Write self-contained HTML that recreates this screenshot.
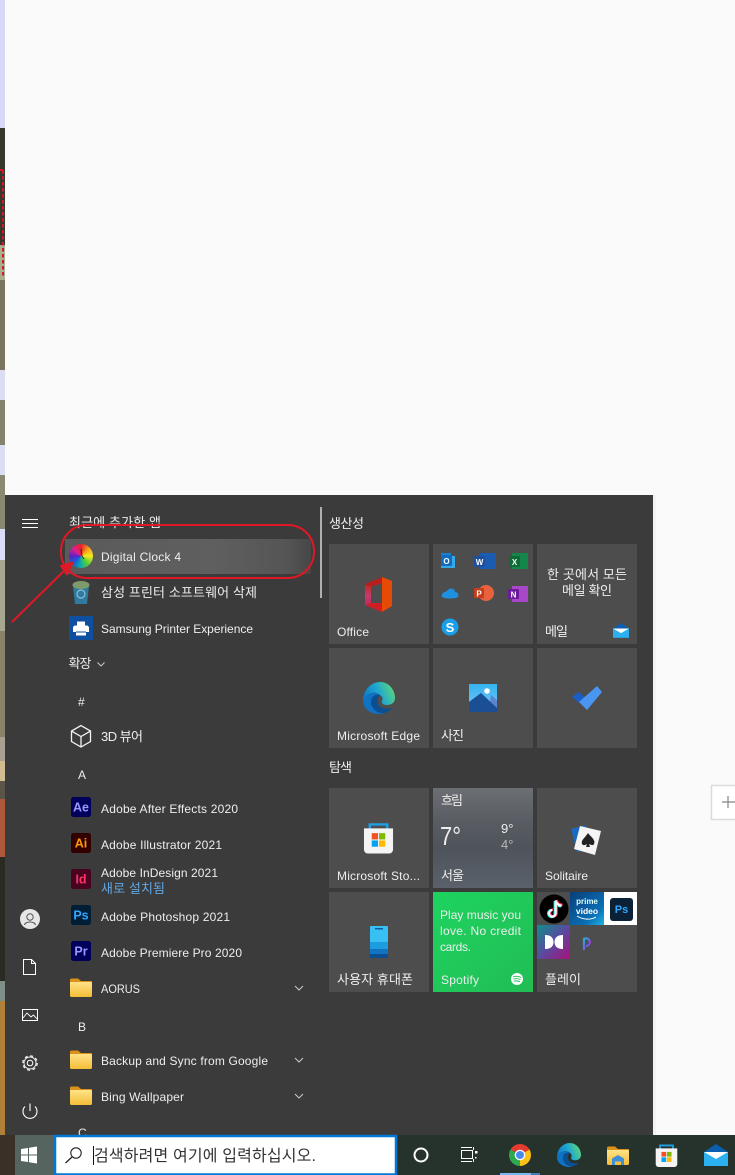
<!DOCTYPE html>
<html lang="ko">
<head>
<meta charset="utf-8">
<title>Start menu</title>
<style>
html,body{margin:0;padding:0;background:#fafafa;width:735px;height:1175px;overflow:hidden}
svg{display:block;position:absolute;left:0;top:0}
text{font-family:"Liberation Sans","Noto Sans CJK KR",sans-serif;font-size:12px;fill:#eeeeee}
.k{font-size:13px}
.b{font-weight:bold;font-size:12.500px;text-anchor:middle}
</style>
</head>
<body>
<svg width="735" height="1175" viewBox="0 0 735 1175" xmlns="http://www.w3.org/2000/svg">
<defs>
  <linearGradient id="row" x1="0" x2="1" y1="0" y2="0"><stop offset="0" stop-color="#5a5a5a"/><stop offset=".6" stop-color="#5f5f5f"/><stop offset=".9" stop-color="#555"/><stop offset="1" stop-color="#464646"/></linearGradient>
  <linearGradient id="wx" x1="0" x2="0" y1="0" y2="1"><stop offset="0" stop-color="#6b6f74"/><stop offset=".35" stop-color="#585c62"/><stop offset=".6" stop-color="#4f545b"/><stop offset="1" stop-color="#5a616b"/></linearGradient>
  <linearGradient id="spot" x1="0" x2="1" y1="0" y2="1"><stop offset="0" stop-color="#1ed35f"/><stop offset="1" stop-color="#21bd55"/></linearGradient>
  <linearGradient id="prime" x1="0" x2="1" y1="0" y2="1"><stop offset="0" stop-color="#0a3d7a"/><stop offset=".7" stop-color="#0a6fb5"/><stop offset="1" stop-color="#1fb4e8"/></linearGradient>
  <linearGradient id="dolby" x1="0" x2="1" y1="0" y2="1"><stop offset="0" stop-color="#0f8f88"/><stop offset=".5" stop-color="#5a4aa0"/><stop offset="1" stop-color="#a8107a"/></linearGradient>
  <linearGradient id="pics" x1="0" x2="1" y1="0" y2="1"><stop offset="0" stop-color="#20b0e0"/><stop offset="1" stop-color="#b020d0"/></linearGradient>
  <linearGradient id="folder" x1="0" x2="0" y1="0" y2="1"><stop offset="0" stop-color="#ffe38a"/><stop offset="1" stop-color="#f5bd35"/></linearGradient>
  <linearGradient id="edgeg" x1="0" x2="1" y1="0.6" y2="0.3"><stop offset="0" stop-color="#0f78c8"/><stop offset=".5" stop-color="#20a8d0"/><stop offset="1" stop-color="#5fd778"/></linearGradient>
  <linearGradient id="photo" x1="0" x2="0" y1="0" y2="1"><stop offset="0" stop-color="#35b4f0"/><stop offset="1" stop-color="#7fc4f5"/></linearGradient>
  <linearGradient id="phone" x1="0" x2="0" y1="0" y2="1"><stop offset="0" stop-color="#38c0f5"/><stop offset=".5" stop-color="#38c0f5"/><stop offset=".5" stop-color="#1e9ce0"/><stop offset=".72" stop-color="#1e9ce0"/><stop offset=".72" stop-color="#1274c0"/><stop offset=".88" stop-color="#1274c0"/><stop offset=".88" stop-color="#0b4f90"/></linearGradient>
  <linearGradient id="lband" x1="0" x2="0" y1="0" y2="1"><stop offset="0" stop-color="#c02a22"/><stop offset=".55" stop-color="#c83a6a"/><stop offset="1" stop-color="#c02a60"/></linearGradient>
  <symbol id="fld" viewBox="0 0 22 19"><path d="M0 2a1.500 1.500 0 0 1 1.500-1.500H8L11 3H22V5H0Z" fill="#d9921a"/><path d="M0 4H20.500A1.500 1.500 0 0 1 22 5.500V17.500A1.500 1.500 0 0 1 20.500 19H1.500A1.500 1.500 0 0 1 0 17.500Z" fill="url(#folder)"/></symbol>
  <symbol id="bag" viewBox="0 0 32 32"><path d="M7 7V2H25V7" fill="none" stroke="#1ea0e6" stroke-width="2.500"/><path d="M1 6H31V28A4 4 0 0 1 27 32H5A4 4 0 0 1 1 28Z" fill="#f4f4f4"/><rect x="9" y="11" width="6.500" height="6.500" fill="#f25022"/><rect x="16.500" y="11" width="6.500" height="6.500" fill="#7fba00"/><rect x="9" y="18.500" width="6.500" height="6.500" fill="#00a4ef"/><rect x="16.500" y="18.500" width="6.500" height="6.500" fill="#ffb900"/></symbol>
  <symbol id="edge" viewBox="-16 -16 32 32"><path d="M-16 3C-16-9-7-16 1-16C10-16 16-8 16 0C16 5 12 7 8 7C4 7 2 5 3 3C4 1 4-1 1-3C-3-7-12-6-16 3Z" fill="url(#edgeg)"/><path d="M-16 3C-12-6-3-7 1-3C-3-4-8-2-8 4C-8 10-2 16 6 15C3 16 1 16 0 16C-9 16-16 10-16 3Z" fill="#0f72c4"/><path d="M-8 4C-8-2-3-4 1-3C-1-1-2 2-1 5C0 10 6 12 13 10C10 14 6 15 5 15C-2 16-8 10-8 4Z" fill="#0b4f92"/></symbol>
  <symbol id="mail" viewBox="0 0 24 22"><path d="M0 8L12 0L24 8V10H0Z" fill="#0a5fb0"/><path d="M0 8H24V22H0Z" fill="#2cb0f0"/><path d="M0 8H24L12 15Z" fill="#fff"/></symbol>
</defs>

<!-- left wallpaper strip -->
<rect x="0" y="0" width="5" height="128" fill="#d8d8f8"/>
<rect x="0" y="128" width="5" height="117" fill="#38372d"/>
<rect x="0" y="245" width="5" height="35" fill="#a8b090"/>
<rect x="0" y="280" width="5" height="90" fill="#7a7560"/>
<rect x="0" y="370" width="5" height="30" fill="#dcdcf4"/>
<rect x="0" y="400" width="5" height="45" fill="#85836c"/>
<rect x="0" y="445" width="5" height="30" fill="#dcdcf4"/>
<rect x="0" y="475" width="5" height="54" fill="#8a8a70"/>
<rect x="0" y="529" width="5" height="31" fill="#dcdcf8"/>
<rect x="0" y="560" width="5" height="71" fill="#a8a890"/>
<rect x="0" y="631" width="5" height="106" fill="#8a8268"/>
<rect x="0" y="737" width="5" height="24" fill="#a8a090"/>
<rect x="0" y="761" width="5" height="20" fill="#d0bc90"/>
<rect x="0" y="781" width="5" height="18" fill="#5a5548"/>
<rect x="0" y="799" width="5" height="58" fill="#b0583c"/>
<rect x="0" y="857" width="5" height="124" fill="#2a2a22"/>
<rect x="0" y="981" width="5" height="20" fill="#7c9088"/>
<rect x="0" y="1001" width="5" height="134" fill="#b08038"/>
<path d="M3 170V278" stroke="#d01828" stroke-width="2" stroke-dasharray="3.500 2.500" fill="none"/>
<path d="M0 170H3" stroke="#d01828" stroke-width="2"/>

<!-- right plus box -->
<rect x="711.500" y="785.500" width="30" height="34" fill="#fff" stroke="#dcdcdc" stroke-width="1.500"/>
<path d="M722 802H735M728 796V808" stroke="#858585" stroke-width="1.200"/>

<!-- start menu -->
<rect x="5" y="495" width="648" height="640" fill="#3b3b3b"/>
<rect x="653" y="495" width="3" height="640" fill="#f3f3f3"/>

<!-- hamburger -->
<path d="M22 519.500H38M22 523.500H38M22 527.500H38" stroke="#fff" stroke-width="1"/>

<!-- app list -->
<text class="k" x="69" y="527" textLength="92">최근에 추가한 앱</text>
<rect x="65" y="539" width="246" height="35" fill="url(#row)"/>
<foreignObject x="69" y="544" width="24" height="24"><div xmlns="http://www.w3.org/1999/xhtml" style="width:24px;height:24px;border-radius:50%;background:conic-gradient(#e8202a,#f7a01a,#f5ea20,#5fd030,#10b0a0,#1060e0,#6020c0,#e02090,#e8202a)"></div></foreignObject>
<path d="M81 549L82 556L84 559" stroke="#2a2a2a" stroke-width="1" fill="none"/>
<text x="101" y="561" textLength="80">Digital Clock 4</text>

<path d="M73 586H89L87 604H75Z" fill="#2f7a9e"/>
<ellipse cx="81" cy="585" rx="8.500" ry="4" fill="#7e9a6c"/>
<circle cx="81" cy="594" r="4" fill="none" stroke="#8cc0dc" stroke-width="1.200"/>
<text class="k" x="101" y="597" textLength="156">삼성 프린터 소프트웨어 삭제</text>

<rect x="69" y="616" width="24" height="24" fill="#0f4fa0"/>
<path d="M77 621.500H85V625.500H87.500L89 627V632H86V635.500H76V632H73V627L74.500 625.500H77Z" fill="#fff"/>
<path d="M76 632H86" stroke="#0f4fa0" stroke-width="1"/>
<text x="101" y="633" textLength="152">Samsung Printer Experience</text>

<text class="k" x="68.500" y="668" textLength="23">확장</text>
<path d="M97.500 662.500L101 666L104.500 662.500" stroke="#ccc" fill="none"/>

<text x="78" y="706">#</text>
<path d="M81 725.500L90.500 731V741.500L81 747L71.500 741.500V731ZM71.500 731L81 736.500L90.500 731M81 736.500V747" fill="none" stroke="#f2f2f2" stroke-width="1.300"/>
<text class="k" x="101" y="741" textLength="42">3D 뷰어</text>

<text x="78" y="779">A</text>
<rect x="71" y="797" width="20" height="20" rx="2.500" fill="#00005b"/><text class="b" x="81" y="811.500" style="fill:#9999ff">Ae</text>
<text x="101" y="813" textLength="137">Adobe After Effects 2020</text>
<rect x="71" y="833" width="20" height="20" rx="2.500" fill="#330000"/><text class="b" x="81" y="847.500" style="fill:#ff9a00">Ai</text>
<text x="101" y="849" textLength="121">Adobe Illustrator 2021</text>
<rect x="71" y="869" width="20" height="20" rx="2.500" fill="#49021f"/><text class="b" x="81" y="883.500" style="fill:#ff3366">Id</text>
<text x="101" y="877" textLength="117">Adobe InDesign 2021</text>
<text class="k" x="101" y="893" textLength="64" style="fill:#62a6e2">새로 설치됨</text>
<rect x="71" y="905" width="20" height="20" rx="2.500" fill="#001e36"/><text class="b" x="81" y="919.500" style="fill:#31a8ff">Ps</text>
<text x="101" y="921" textLength="129">Adobe Photoshop 2021</text>
<rect x="71" y="941" width="20" height="20" rx="2.500" fill="#00005b"/><text class="b" x="81" y="955.500" style="fill:#9999ff">Pr</text>
<text x="101" y="957" textLength="141">Adobe Premiere Pro 2020</text>
<use href="#fld" x="70" y="978" width="22" height="19"/>
<text x="101" y="993" textLength="39" lengthAdjust="spacingAndGlyphs">AORUS</text>
<path d="M295 986L299 990L303 986" stroke="#ccc" fill="none"/>
<text x="78" y="1031">B</text>
<use href="#fld" x="70" y="1050" width="22" height="19"/>
<text x="101" y="1065" textLength="167">Backup and Sync from Google</text>
<path d="M295 1058L299 1062L303 1058" stroke="#ccc" fill="none"/>
<use href="#fld" x="70" y="1086" width="22" height="19"/>
<text x="101" y="1101" textLength="83">Bing Wallpaper</text>
<path d="M295 1094L299 1098L303 1094" stroke="#ccc" fill="none"/>
<text x="78" y="1137">C</text>

<!-- scrollbar -->
<rect x="320" y="507" width="2" height="91" fill="#b0b0b0"/>

<!-- left rail icons -->
<circle cx="30" cy="919" r="10" fill="#e6e6e6"/>
<circle cx="30" cy="917" r="3.200" fill="none" stroke="#555" stroke-width="1"/>
<path d="M24.500 925C25 921 35 921 35.500 925" fill="none" stroke="#555" stroke-width="1"/>
<path d="M23.500 959.500H31.500L35.500 963.500V974.500H23.500ZM31.500 959.500V963.500H35.500" fill="none" stroke="#fff" stroke-width="1"/>
<rect x="22.500" y="1009.500" width="15" height="11" fill="none" stroke="#fff"/>
<path d="M23 1018L27 1013L31 1017L33.500 1015L37 1019" fill="none" stroke="#fff" stroke-width=".9"/>
<circle cx="30" cy="1063" r="2.800" fill="none" stroke="#fff"/>
<circle cx="30" cy="1063" r="6" fill="none" stroke="#fff" stroke-width=".9"/>
<circle cx="30" cy="1063" r="7.200" fill="none" stroke="#fff" stroke-width="1.200" stroke-dasharray="2.900 2.750"/>
<path d="M25 1106.500A7 7 0 1 0 35 1106.500M30 1103.500V1111" fill="none" stroke="#fff" stroke-width="1.100"/>

<!-- annotation -->
<rect x="61" y="525" width="253" height="53" rx="26" fill="none" stroke="#e01825" stroke-width="2"/>
<path d="M12 622L66 569" stroke="#e01825" stroke-width="2"/>
<path d="M74.500 561L59.500 565.500L67 576Z" fill="#e01825"/>

<!-- tiles -->
<text class="k" x="329" y="528" textLength="35">생산성</text>
<g fill="#4d4d4d">
<rect x="329" y="544" width="100" height="100"/><rect x="433" y="544" width="100" height="100"/><rect x="537" y="544" width="100" height="100"/>
<rect x="329" y="648" width="100" height="100"/><rect x="433" y="648" width="100" height="100"/><rect x="537" y="648" width="100" height="100"/>
<rect x="329" y="788" width="100" height="100"/><rect x="537" y="788" width="100" height="100"/>
<rect x="329" y="892" width="100" height="100"/><rect x="537" y="892" width="100" height="100"/>
</g>

<!-- office -->
<path d="M382 577L392 581V606L382 612L372 606L382 603V583L372 586Z" fill="#e64a05"/>
<path d="M382 577V583L371 586.500L365 586.500V584Z" fill="#b81e1e"/>
<path d="M365 585L371 586.500V603L365 605Z" fill="url(#lband)"/>
<path d="M365 605L371 603L382 603V612Z" fill="#d01f24"/>
<text x="337" y="636" textLength="32">Office</text>

<!-- office apps -->
<rect x="441" y="556" width="14" height="12" fill="#35a8e8"/><rect x="441" y="553" width="10" height="6" fill="#1a80d0"/><rect x="441" y="555" width="11" height="11" rx="1" fill="#0f6cc0"/><text x="446.500" y="564" style="font-size:8px;font-weight:bold;text-anchor:middle;fill:#fff">O</text>
<rect x="480" y="553" width="16" height="16" fill="#1a5cb0"/><rect x="474" y="556" width="11" height="11" rx="1" fill="#1e4f9e"/><text x="479.500" y="565" style="font-size:8px;font-weight:bold;text-anchor:middle;fill:#fff">W</text>
<rect x="512" y="553" width="16" height="16" fill="#15864a"/><rect x="509" y="556" width="11" height="11" rx="1" fill="#0e6b38"/><text x="514.500" y="565" style="font-size:8px;font-weight:bold;text-anchor:middle;fill:#fff">X</text>
<path d="M442 597C441 592 446 592 447 591C449 587 455 588 455 592C458 592 459 595 458 597C455 599 445 599 442 597Z" fill="#1f8fe0"/>
<circle cx="486" cy="593" r="8" fill="#e8623e"/><rect x="474" y="588" width="10" height="10" rx="1" fill="#c43e1c"/><text x="479" y="596.500" style="font-size:8px;font-weight:bold;text-anchor:middle;fill:#fff">P</text>
<rect x="512" y="586" width="16" height="16" fill="#a848c8"/><rect x="508" y="589" width="11" height="10" rx="1" fill="#6a1a9a"/><text x="513.500" y="597.500" style="font-size:8px;font-weight:bold;text-anchor:middle;fill:#fff">N</text>
<circle cx="450" cy="627" r="8.500" fill="#1a9ee8"/><text x="450" y="632" style="font-size:13px;font-weight:bold;text-anchor:middle;fill:#fff">S</text>

<!-- mail -->
<text class="k" x="547" y="579" textLength="80">한 곳에서 모든</text>
<text class="k" x="562" y="595" textLength="50">메일 확인</text>
<text class="k" x="545" y="636" textLength="23">메일</text>
<use href="#mail" x="613" y="623" width="16" height="15"/>

<!-- edge / photos / todo -->
<use href="#edge" x="363" y="682" width="32" height="32"/>
<text x="337" y="740" textLength="83">Microsoft Edge</text>
<rect x="469" y="684" width="28" height="28" fill="url(#photo)"/>
<circle cx="487" cy="691" r="2.800" fill="#fff"/>
<path d="M469 712V702L481 693L490 702L491 695L497 700V712Z" fill="#5a84d0"/>
<path d="M469 712V702L481 693L497 708V712Z" fill="#1a4f96"/>
<text class="k" x="441" y="740" textLength="23">사진</text>
<path d="M572 697L579 692L587 700L582 705Z" fill="#1a5fc8"/>
<path d="M579 702L597 686L602 692L587 710Z" fill="#4a95f0"/>

<!-- section 2 -->
<text class="k" x="329" y="772" textLength="23">탐색</text>
<use href="#bag" x="363" y="822" width="31" height="32"/>
<text x="337" y="880" textLength="83">Microsoft Sto...</text>

<rect x="433" y="788" width="100" height="100" fill="url(#wx)"/>
<text class="k" x="441" y="805" textLength="22">흐림</text>
<text x="440" y="845" textLength="21" lengthAdjust="spacingAndGlyphs" style="font-size:26px">7°</text>
<text x="501" y="833" style="font-size:13px">9°</text>
<text x="501" y="849" style="font-size:13px;fill:#b5b8bc">4°</text>
<text class="k" x="441" y="880" textLength="23">서울</text>

<path d="M571 829L586 825L589 849L577 852Z" fill="#1a68c0"/>
<path d="M580 826L601 831L595 855L574 849Z" fill="#f4f4f4"/>
<path d="M588 833C584 839 581 840 582 844C583 846 586 845 587 844L586 847H590L589 844C591 845 593 846 594 844C596 840 591 837 588 833Z" fill="#222"/>
<text x="545" y="880" textLength="43">Solitaire</text>

<rect x="370" y="926" width="18" height="32" rx="1" fill="url(#phone)"/>
<rect x="375" y="928" width="8" height="1.500" fill="#0e5fa0"/>
<text class="k" x="337" y="984" textLength="76">사용자 휴대폰</text>

<rect x="433" y="892" width="100" height="100" fill="url(#spot)"/>
<text x="440" y="919" textLength="81">Play music you</text>
<text x="440" y="935" textLength="81">love. No credit</text>
<text x="440" y="951" textLength="31">cards.</text>
<text x="441" y="984" textLength="38">Spotify</text>
<circle cx="517" cy="979" r="6" fill="#fff"/>
<path d="M513 977C515 976 519 976 521 977.500M513.500 979.200C515 978.500 519 978.500 520.500 979.700M514 981.200C516 980.700 518 980.700 520 981.700" stroke="#21bd55" fill="none" stroke-width=".9"/>

<rect x="570" y="892" width="34" height="33" fill="url(#prime)"/>
<text x="587" y="904" style="font-size:8px;font-weight:bold;text-anchor:middle;fill:#dff">prime</text>
<text x="587" y="914" style="font-size:8.500px;font-weight:bold;text-anchor:middle;fill:#fff">video</text>
<path d="M577 916C583 920 591 920 596 917" stroke="#fff" fill="none"/>
<rect x="604" y="892" width="33" height="33" fill="#fff"/>
<rect x="610" y="898" width="23" height="23" rx="3" fill="#0b2136"/>
<text x="621.500" y="913" style="font-size:11px;font-weight:bold;text-anchor:middle;fill:#31a8ff">Ps</text>
<circle cx="554" cy="909" r="14.500" fill="#000"/>
<path d="M555 901V913.500A3.300 3.300 0 1 1 551.500 910.200M555 901C555.500 904 558 906 561 906" fill="none" stroke="#25f4ee" stroke-width="2.800"/>
<path d="M556.500 900V913A3.300 3.300 0 1 1 553 909.700M556.500 900C557 903 559.500 905 562.500 905" fill="none" stroke="#fe2c55" stroke-width="2.800"/>
<path d="M555.700 900.500V913.200A3.300 3.300 0 1 1 552.300 910M555.700 900.500C556.200 903.500 558.700 905.500 561.700 905.500" fill="none" stroke="#fff" stroke-width="2.200"/>
<rect x="537" y="925" width="33" height="34" fill="url(#dolby)"/>
<path d="M545 935C551 935 553.500 938 553.500 942C553.500 946 551 949 545 949ZM563 935C557 935 554.500 938 554.500 942C554.500 946 557 949 563 949Z" fill="#fff"/>
<path d="M584 950V939A3.800 3.800 0 1 1 586 946" fill="none" stroke="url(#pics)" stroke-width="2.200"/>
<text class="k" x="545" y="984" textLength="36">플레이</text>

<!-- taskbar -->
<rect x="0" y="1135" width="735" height="40" fill="#26322c"/>
<rect x="0" y="1135" width="15" height="40" fill="#3a3028"/>
<rect x="15" y="1135" width="39" height="40" fill="#55645e"/>
<path d="M21 1149L28 1148V1154.500H21ZM29 1147.800L37 1146.500V1154.500H29ZM21 1155.500H28V1162L21 1161ZM29 1155.500H37V1163.500L29 1162.300Z" fill="#fff"/>

<rect x="55" y="1136" width="341" height="38.500" fill="#fff" stroke="#0078d7" stroke-width="2.500"/>
<circle cx="76" cy="1153" r="5.200" fill="none" stroke="#222" stroke-width="1.100"/>
<path d="M72 1157L65.500 1163" stroke="#222" stroke-width="1.300"/>
<path d="M93.500 1146V1165" stroke="#111" stroke-width="1"/>
<text x="94" y="1161" textLength="222" style="font-size:16px;fill:#333">검색하려면 여기에 입력하십시오.</text>

<circle cx="421" cy="1155" r="6.500" fill="none" stroke="#fff" stroke-width="2"/>
<path d="M461.500 1150.500H472.500V1158.500H461.500Z" fill="none" stroke="#fff"/>
<path d="M461 1147.500H472M461 1161.500H472M473.500 1147V1150M473.500 1159V1162" stroke="#fff" fill="none"/>
<rect x="475" y="1151" width="2.500" height="2.500" fill="#fff"/>
<rect x="475" y="1157" width="1.500" height="1.500" fill="#fff"/>

<g transform="translate(520 1155)">
<path d="M0 0L-9.500-5.500A11 11 0 0 1 9.500-5.500Z" fill="#e33b2e"/>
<path d="M0 0L9.500-5.500A11 11 0 0 1 0 11Z" fill="#fbc116"/>
<path d="M0 0L0 11A11 11 0 0 1-9.500-5.500Z" fill="#2da94f"/>
<circle r="5.300" fill="#fff"/><circle r="4" fill="#4a8af0"/>
</g>
<rect x="500" y="1173" width="31" height="2" fill="#76b9ed"/>
<rect x="531" y="1173" width="9" height="2" fill="#3f7fb0"/>
<use href="#edge" x="557" y="1143" width="24" height="24"/>
<use href="#fld" x="607" y="1146" width="22" height="19"/>
<path d="M612 1165V1158.500L618 1155L624 1158.500V1165H621V1161.500H615V1165Z" fill="#3f8fd8"/>
<use href="#bag" x="655" y="1144" width="23" height="23"/>
<use href="#mail" x="704" y="1144" width="24" height="22"/>
</svg>
</body>
</html>
